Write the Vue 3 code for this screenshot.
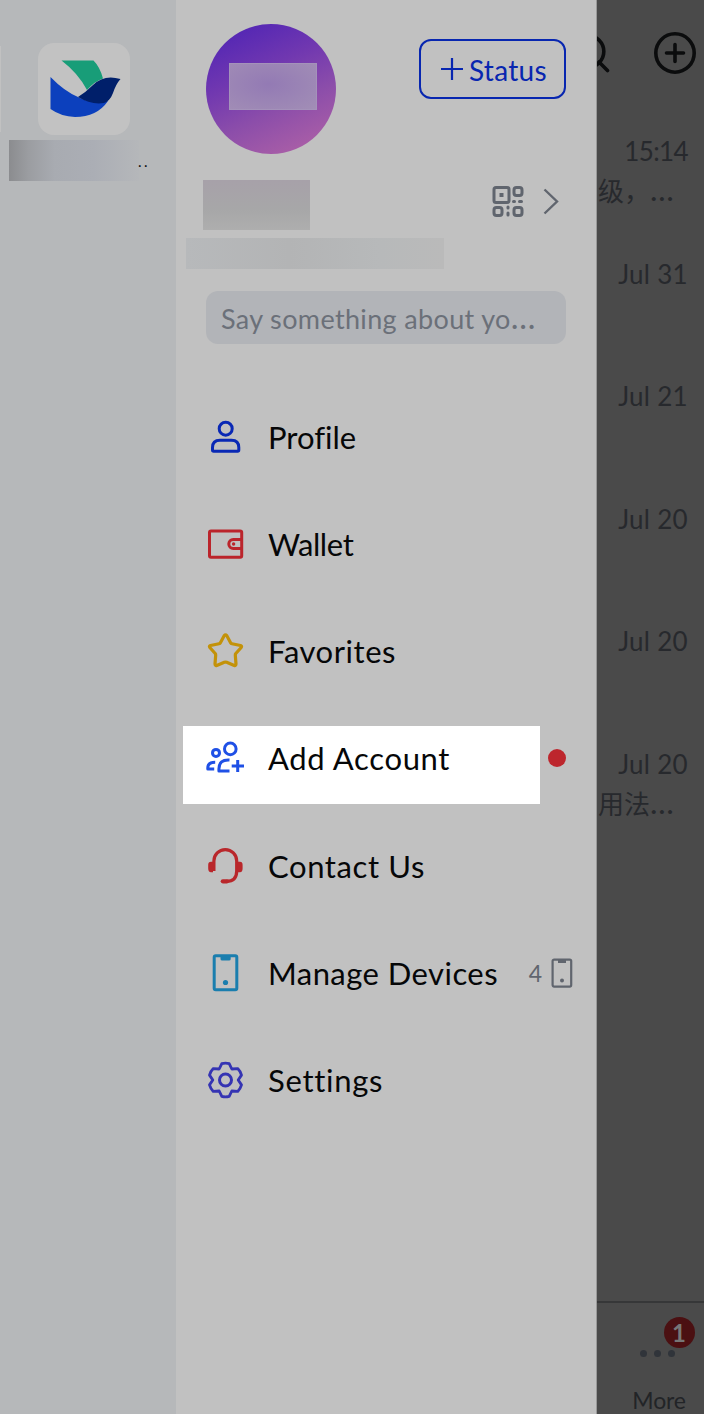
<template>
  <div class="screen">
    <aside class="rail">
      <div class="prev-tile"></div>
      <div class="app-tile">
        <svg viewBox="0 0 92 92" width="92" height="92">
          <path d="M23.500 17.500H55.500Q62 24 65 35.500Q57 38 49 47Q40 30 23.500 17.500Z" fill="#189d78" />
          <path d="M12.500 34Q26 48 40 54Q52 61 70 58Q59 74 37 74Q23 73.500 12.500 66Z" fill="#0c40bd" />
          <path d="M40 54Q48 49 55 42Q66 31 82.500 36Q78 41 75 50Q72 58 66 60Q53 62 40 54Z" fill="#001f6a" />
        </svg>
      </div>
      <div class="tenant">
        <div class="mask-tenant"></div>
        <span class="dots">..</span>
      </div>
    </aside>

    <main class="drawer">
      <div class="head">
        <div class="avatar"><div class="mask-avatar"></div></div>
        <button class="status">
          <svg viewBox="0 0 22 22" width="22" height="22"><path d="M11 0V22M0 11H22" stroke="#0826b0" stroke-width="2.2" /></svg>
          <span>Status</span>
        </button>
      </div>

      <div class="name-row">
        <div class="mask-name"></div>
        <div class="name-tools">
          <svg viewBox="0 0 32 32" width="32" height="32" fill="none" stroke="#60656e" stroke-width="3">
            <rect x="2" y="1.500" width="15" height="15" rx="2" />
            <rect x="22" y="1.500" width="8" height="8" rx="2.500" />
            <rect x="2" y="21.500" width="8" height="8" rx="2.500" />
            <rect x="22" y="21.500" width="8" height="8" rx="2.500" />
            <path d="M7.500 9H11.500" stroke-width="4" />
            <path d="M21.500 15.500H22.500M27.500 15.500H29.500M16 21V22M16 27V29" stroke-linecap="round" />
          </svg>
          <svg viewBox="0 0 16 28" width="16" height="28" fill="none" stroke="#60656e" stroke-width="2.400"><path d="M1.500 1.500L14 13.500L1.500 25.500" /></svg>
        </div>
      </div>
      <div class="mask-org"></div>
      <div class="bio">Say something about yo<span class="ell">…</span></div>

      <nav class="menu">
        <div v-for="item in items" :key="item.icon" class="item" :class="item.icon">
          <svg class="icon" viewBox="0 0 40 40" fill="none" stroke="currentColor" stroke-width="3" stroke-linejoin="round">
            <template v-if="item.icon === 'profile'">
              <circle cx="19.700" cy="11.700" r="6.500" />
              <path d="M6.500 33V30.500Q6.500 23.200 14 23.200H25.500Q32.800 23.200 32.800 30.500V33Q32.800 34.200 31.600 34.200H7.700Q6.500 34.200 6.500 33Z" />
            </template>
            <template v-else-if="item.icon === 'wallet'">
              <rect x="3.500" y="7" width="32.200" height="26.200" rx="1.500" />
              <path d="M35.500 15.500H27.300A4.500 4.500 0 0 0 27.300 24.500H35.500" />
              <circle cx="27.600" cy="20" r="1.700" fill="currentColor" stroke="none" />
            </template>
            <path v-else-if="item.icon === 'favorites'" d="M18.300 4.600Q19.500 3.200 20.700 4.600L24.600 11.700Q25 12.500 26 12.700L34.500 14.500Q36.300 15.200 35.200 16.500L29.800 22.500Q29.200 23.300 29.300 24.200L30 33Q29.900 35 28.200 34.400L20.700 31.300Q19.500 30.800 18.300 31.300L10.800 34.400Q9.100 35 9 33L9.700 24.200Q9.800 23.300 9.200 22.500L3.800 16.500Q2.700 15.200 4.500 14.500L13 12.700Q14 12.500 14.400 11.700Z" stroke-width="3.200" />
            <template v-else-if="item.icon === 'account'">
              <circle cx="10" cy="14.900" r="3.500" />
              <circle cx="24.300" cy="10.900" r="5.800" />
              <path d="M9.200 24.300Q1.800 24.300 1.800 30V31H8.200M23.500 22Q12.900 21.300 12.900 31V33H23.500M31.700 22V34M25.700 28H38" />
            </template>
            <template v-else-if="item.icon === 'contact'">
              <path d="M7.900 25V15A11.400 11.400 0 0 1 30.700 15V25Q30.700 35.300 20.500 35.300" stroke-width="3.200" />
              <path d="M7 15.800V26.200H5Q2.200 26 2.200 22.500V19Q2.200 15.800 5 15.800ZM31.500 15.800V26.200H34Q36.600 26 36.600 22.500V19Q36.600 15.800 34 15.800Z" fill="currentColor" stroke="none" />
              <path d="M16.800 35.300H21" stroke-width="4.200" stroke-linecap="round" />
            </template>
            <template v-else-if="item.icon === 'devices'">
              <rect x="8.200" y="2.700" width="22.600" height="34" rx="1.500" />
              <path d="M14.500 2.500H24.700V6Q24.700 7.600 23 7.600H16.200Q14.500 7.600 14.500 6Z" fill="currentColor" stroke="none" />
              <circle cx="19.500" cy="29.500" r="2.600" fill="currentColor" stroke="none" />
            </template>
            <template v-else>
              <path d="M15.800 3.700Q19.500 2.600 23.200 3.700L25.800 9L31.700 8.600Q34.400 11.300 35.500 15.100L32.200 20L35.500 24.900Q34.400 28.700 31.700 31.400L25.800 31L23.200 36.300Q19.500 37.400 15.800 36.300L13.200 31L7.300 31.400Q4.600 28.700 3.500 24.900L6.800 20L3.500 15.100Q4.600 11.300 7.300 8.600L13.200 9Z" stroke-width="2.800" />
              <circle cx="19.500" cy="20" r="6" />
            </template>
          </svg>
          <span class="label">{{ item.label }}</span>
          <i v-if="item.icon === 'account'" class="red-dot"></i>
          <span v-if="item.icon === 'devices'" class="count">
            4
            <svg viewBox="0 0 22 30" width="22" height="30" fill="none" stroke="#60656e" stroke-width="2.200">
              <rect x="1.600" y="1.600" width="18.600" height="27" rx="1.500" />
              <path d="M7 2H15V5H7Z" fill="#60656e" stroke="none" />
              <circle cx="11" cy="22.500" r="2" fill="#60656e" stroke="none" />
            </svg>
          </span>
        </div>
      </nav>
    </main>

    <section class="chats">
      <header class="bar">
        <svg class="search" viewBox="0 0 16 46" width="16" height="46" fill="none" stroke="#0b0c0d" stroke-width="3.600">
          <circle cx="-9" cy="19.500" r="15.800" />
          <path d="M2 30L10.500 38.500" stroke-linecap="round" />
        </svg>
        <svg viewBox="0 0 42 42" width="42" height="42" fill="none" stroke="#0b0c0d" stroke-width="3.600">
          <circle cx="21" cy="21" r="19.200" />
          <path d="M21 12.500V29.500M12.500 21H29.500" stroke-linecap="round" />
        </svg>
      </header>
      <div v-for="(c, i) in chats" :key="i" class="chat">
        <div class="time" :class="{ clock: i === 0 }">{{ c.time }}</div>
        <div v-if="c.msg" class="msg">{{ c.msg }}<span class="ell">…</span></div>
      </div>
      <footer class="tab">
        <div class="more-dots"><i></i><i></i><i></i><b class="badge">1</b></div>
        <span>More</span>
      </footer>
    </section>
  </div>
</template>

<script setup>
const items = [
  { icon: 'profile', label: 'Profile' },
  { icon: 'wallet', label: 'Wallet' },
  { icon: 'favorites', label: 'Favorites' },
  { icon: 'account', label: 'Add Account' },
  { icon: 'contact', label: 'Contact Us' },
  { icon: 'devices', label: 'Manage Devices' },
  { icon: 'settings', label: 'Settings' },
];
const chats = [
  { time: '15:14', msg: '级，' },
  { time: 'Jul 31', msg: '' },
  { time: 'Jul 21', msg: '' },
  { time: 'Jul 20', msg: '' },
  { time: 'Jul 20', msg: '' },
  { time: 'Jul 20', msg: '用法' },
];
</script>

<style>
body { margin:0; background:#4a4a4a; }
</style>

<style scoped>
* { box-sizing:border-box; }
.screen { display:grid; grid-template-columns:176px 421px 107px; width:704px; height:1414px; overflow:hidden; font-family:Lato, "Noto Sans CJK SC", sans-serif; font-variant-ligatures:none; }
svg { display:block; flex:none; }
.ell { font-size:1.22em; line-height:1; letter-spacing:0; }

.rail { background:#b6b8ba; padding-top:43px; display:grid; grid-template-columns:1px 1fr; grid-template-rows:92px 50px; align-content:start; }
.prev-tile { background:#c1c1c1; height:86px; margin-top:3px; }
.app-tile { width:92px; height:92px; margin-left:37px; border-radius:16px; background:#c2c2c2; }
.tenant { grid-column:1 / 3; display:flex; padding:5px 0 0 9px; height:46px; }
.mask-tenant { width:130px; height:41px; background:linear-gradient(90deg,#8b8c8f 0,#9b9da1 15%,#a8abb1 35%,#abaeb5 65%,#b5b7ba 100%); }
.dots { margin-left:-1px; font-size:15px; line-height:43px; color:#111; letter-spacing:2.500px; }

.drawer { background:#c1c1c1; padding:24px 0 0 30px; border-right:1px solid #999; }
.head { display:flex; justify-content:space-between; padding-right:30px; height:156px; }
.avatar { width:130px; height:130px; border-radius:50%; background:linear-gradient(155deg,#5628b4 12%,#7138b0 38%,#8b4daa 62%,#b062a6 96%); padding:39px 0 0 23px; }
.mask-avatar { width:88px; height:47px; background:radial-gradient(ellipse at 45% 45%,#937ab4,#a28eb6); border:1px solid #a492ba; }
.status { width:147px; height:60px; margin-top:15px; border:2px solid #0826b0; border-radius:12px; background:none; color:#0826b0; display:flex; align-items:center; gap:6px; padding:0 0 0 20px; font:28px Lato, sans-serif; letter-spacing:.3px; }
.status span { position:relative; top:1px; }
.name-row { display:flex; justify-content:space-between; height:58px; padding-right:37px; }
.mask-name { width:107px; height:50px; margin-left:-3px; background:linear-gradient(180deg,#a7a1a9,#a7a7a8 60%,#aeaeae); }
.name-tools { display:flex; align-items:center; gap:19px; height:43px; }
.mask-org { width:258px; height:31px; margin-left:-20px; background:linear-gradient(90deg,#b7b9bb,#b3b4b5 40%,#b7b9ba 75%,#bababa); }
.bio { width:360px; height:53px; margin-top:22px; border-radius:12px; background:#b2b4b8; color:#6b7079; font-size:27px; line-height:55px; padding-left:15px; letter-spacing:.35px; white-space:nowrap; }

.menu { margin-top:39px; }
.item { position:relative; height:107.250px; display:flex; align-items:center; color:#060708; }
.icon { width:40px; height:40px; position:relative; }
.label { position:relative; margin-left:22px; font-size:31px; line-height:40px; white-space:nowrap; }
.profile .icon { color:#0928b5; }
.wallet .icon { color:#bb242b; }
.wallet .label { letter-spacing:-.4px; }
.favorites .icon { color:#c39209; }
.favorites .label { letter-spacing:.55px; }
.account .icon { color:#1f50e6; }
.account .label { letter-spacing:.65px; }
.contact .icon { color:#b9272b; }
.contact .label { letter-spacing:.6px; }
.devices .icon { color:#1a7eae; }
.devices .label { letter-spacing:.45px; }
.settings .icon { color:#3534b3; }
.settings .label { letter-spacing:.7px; }
/* highlighted entry sits behind the row content */
.account::before { content:""; position:absolute; left:-23px; top:21px; width:357px; height:78px; background:#fff; }
.red-dot { width:18px; height:18px; border-radius:50%; background:#bd262d; margin-left:auto; margin-right:30px; }
.count { display:flex; align-items:center; gap:9px; margin-left:auto; margin-right:23px; font-size:23px; color:#60656e; }

.chats { background:#4a4a4a; color:#27292d; display:flex; flex-direction:column; overflow:hidden; }
.bar { height:132px; display:flex; justify-content:space-between; padding:32px 8px 0 0; }
.chat { height:122.600px; flex:none; }
.time { font-size:26px; line-height:38px; text-align:right; padding-right:16px; letter-spacing:.3px; }
.clock { letter-spacing:-.6px; }
.msg { height:40px; font-size:26px; line-height:42px; padding-left:1px; white-space:nowrap; }
.tab { margin-top:auto; height:113px; border-top:2px solid #363738; display:flex; flex-direction:column; align-items:center; padding-left:17px; font-size:23px; color:#222427; }
.more-dots { position:relative; display:flex; gap:7px; margin:47px 4px 0 0; }
.more-dots i { width:7px; height:7px; border-radius:50%; background:#30343a; }
.badge { position:absolute; left:24px; top:-33px; width:31px; height:31px; border-radius:50%; background:#4b1012; color:#777; font:bold 24px/31px Lato, sans-serif; text-align:center; }
.tab span { line-height:28px; margin-top:29px; letter-spacing:-.2px; }
</style>
